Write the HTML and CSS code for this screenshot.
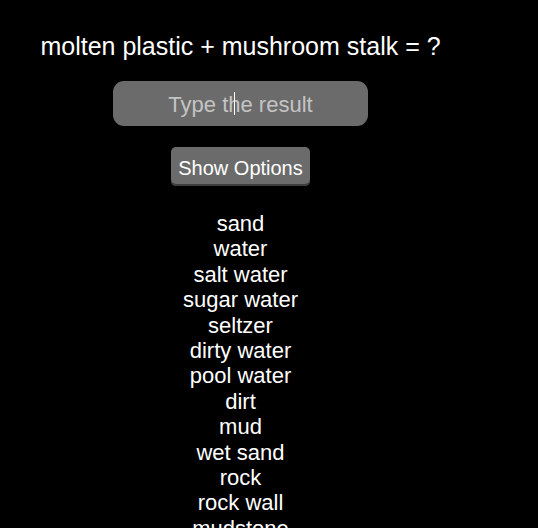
FILE: index.html
```html
<!DOCTYPE html>
<html>
<head>
<meta charset="utf-8">
<link rel="stylesheet" href="styles.css">
</head>
<body>
<main class="game">
  <h1 class="question">molten plastic + mushroom stalk = ?</h1>
  <div class="field">
    <input class="answer" type="text" placeholder="Type the result">
    <span class="caret"></span>
  </div>
  <button class="show-btn">Show Options</button>
  <ul class="options">
    <li>sand</li>
    <li>water</li>
    <li>salt water</li>
    <li>sugar water</li>
    <li>seltzer</li>
    <li>dirty water</li>
    <li>pool water</li>
    <li>dirt</li>
    <li>mud</li>
    <li>wet sand</li>
    <li>rock</li>
    <li>rock wall</li>
    <li>mudstone</li>
    <li>sandstone</li>
  </ul>
</main>
</body>
</html>
```
FILE: styles.css
```css
html, body {
  margin: 0;
  padding: 0;
  background: #000;
  overflow: hidden;
}
.game {
  width: 481px;
  display: flex;
  flex-direction: column;
  align-items: center;
  font-family: "Liberation Sans", Arial, sans-serif;
  color: #fff;
}
.question {
  margin: 32px 0 0 0;
  font-size: 25px;
  font-weight: normal;
  line-height: 29px;
}
.field {
  position: relative;
  margin-top: 20px;
}
.answer {
  display: block;
  box-sizing: border-box;
  width: 255px;
  height: 45px;
  border: none;
  border-radius: 11px;
  background: #6b6b6b;
  color: #fff;
  font-family: "Liberation Sans", Arial, sans-serif;
  font-size: 22px;
  text-align: center;
  outline: none;
  padding: 2px 0 0 0;
}
.answer::placeholder {
  color: #c4c4c4;
}
.caret {
  position: absolute;
  left: 121px;
  top: 11px;
  width: 1px;
  height: 23px;
  background: #fff;
}
.show-btn {
  margin-top: 21px;
  box-sizing: border-box;
  width: 139px;
  height: 39px;
  border: none;
  border-radius: 5px;
  background: #6b6b6b;
  box-shadow: inset 0 -2px 0 #3d3d3d;
  color: #fff;
  font-family: "Liberation Sans", Arial, sans-serif;
  font-size: 20px;
  padding: 3px 0 0 0;
}
.options {
  list-style: none;
  margin: 25px 0 0 0;
  padding: 0;
  text-align: center;
  font-size: 22px;
  line-height: 25.4px;
}
```
